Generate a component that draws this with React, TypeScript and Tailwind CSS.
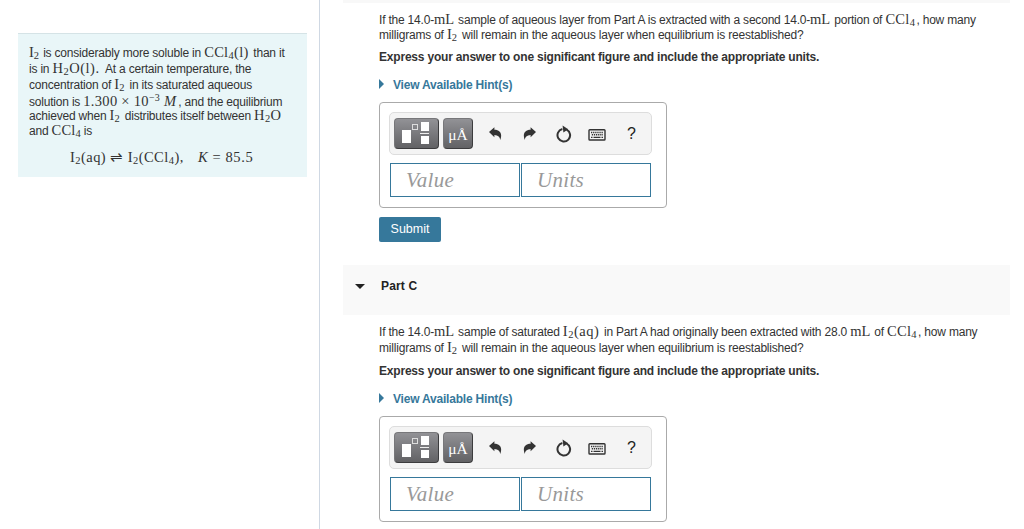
import type { ReactNode } from "react";
import clsx from "clsx";

interface TextProps {
  children: ReactNode;
  className?: string;
}

// One line of body copy
function Line({ children, className }: TextProps) {
  return <div className={clsx("whitespace-pre", className)}>{children}</div>;
}

// Inline chemistry / math
function Chem({ children, className }: TextProps) {
  return (
    <span
      className={clsx(
        "inline-block font-['Liberation_Serif',serif] text-[14.5px] leading-[14px] whitespace-pre",
        className ?? "tracking-normal"
      )}
    >
      {children}
    </span>
  );
}

function Sub({ children }: { children: ReactNode }) {
  return <span className="align-[-2px] text-[10.5px] leading-none">{children}</span>;
}

function TemplateIcon() {
  return (
    <svg width="43" height="31" viewBox="0 0 43 31" fill="none">
      <rect x="7" y="12" width="9" height="13" fill="#fff" />
      <rect x="17.5" y="6.5" width="5" height="5" stroke="#ddd" />
      <rect x="26" y="4" width="8" height="9" fill="#fff" />
      <rect x="25" y="15" width="9" height="1" fill="#eee" />
      <rect x="26" y="18" width="8" height="8" fill="#fff" />
    </svg>
  );
}

function UndoIcon({ className }: { className?: string }) {
  return (
    <svg className={className} width="13" height="14" viewBox="0 0 13 14" fill="#333">
      <path d="M0 5 5.4 0.3V2.8C11.5 2.8 13.6 7.4 11.2 13 11.1 9.7 9.2 8.1 5.4 7.9V10.2Z" />
    </svg>
  );
}

function ResetIcon() {
  return (
    <svg width="16" height="18" viewBox="0 0 16 18" fill="none">
      <path d="M10.6 4.6A6.3 6.3 0 1 1 6.4 4.1" stroke="#333" strokeWidth="2" />
      <path d="M6.6 0.6 12.2 4.2 7.4 7.4Z" fill="#333" />
    </svg>
  );
}

function KeyboardIcon() {
  return (
    <svg width="18" height="12" viewBox="0 0 18 12" fill="none">
      <rect x="1" y="0.75" width="16" height="10.2" rx="0.8" stroke="#333" strokeWidth="1.4" />
      <path d="M3 3.5H15M3.8 5.7H15" stroke="#333" strokeWidth="1.4" strokeDasharray="1.3 0.8" />
      <path d="M3 8.3H4.5M5.5 8.3H12.5M13.5 8.3H15" stroke="#333" strokeWidth="1.2" />
    </svg>
  );
}

const toolButton =
  "flex h-[31px] items-center justify-center rounded-[4px] border border-[#3c3c3e] border-t-[#77777a] border-l-[#77777a] bg-linear-to-b from-[#929296] to-[#626265]";

function AnswerBox() {
  return (
    <div className="h-[106px] w-[288px] rounded-[4px] border border-[#aaa] pt-[9px] pl-[9px]">
      <div className="flex h-[43px] w-[263px] items-center rounded-[5px] border border-[#ddd] bg-[#f4f4f4] pl-[4px]">
        <button className={clsx(toolButton, "w-[45px]")} aria-label="Templates">
          <TemplateIcon />
        </button>
        <button
          className={clsx(
            toolButton,
            "ml-[4px] w-[30px] pt-[3px] font-['Liberation_Serif',serif] text-[15.5px] leading-none tracking-normal text-white"
          )}
        >
          μÅ
        </button>
        <button className="ml-[16px]" aria-label="Undo">
          <UndoIcon />
        </button>
        <button className="ml-[21px]" aria-label="Redo">
          <UndoIcon className="-scale-x-100" />
        </button>
        <button className="ml-[20px]" aria-label="Reset">
          <ResetIcon />
        </button>
        <button className="mt-[3px] ml-[16px]" aria-label="Keyboard">
          <KeyboardIcon />
        </button>
        <button className="ml-[21px] text-[16px] leading-none text-[#222]">?</button>
      </div>
      <div className="mt-[8px] ml-[1px] flex gap-px font-['Liberation_Serif',serif] text-[21px] leading-[33px] tracking-[0.3px] text-[#999] italic">
        <div className="h-[34px] w-[130px] border border-[#36789b] pl-[15px]">Value</div>
        <div className="h-[34px] w-[130px] border border-[#36789b] pl-[15px]">Units</div>
      </div>
    </div>
  );
}

function Instructions() {
  return (
    <>
      <Line className="mt-[8px] h-[15px] leading-[15px] font-bold">
        Express your answer to one significant figure and include the appropriate units.
      </Line>
      <div className="mt-[12px] mb-[10px] flex h-[15px] items-center font-bold text-[#36789b]">
        <svg className="mb-[2px]" width="5" height="10" viewBox="0 0 5 10" fill="#36789b">
          <path d="M0 0 5 5 0 10Z" />
        </svg>
        <span className="ml-[9px]">View Available Hint(s)</span>
      </div>
    </>
  );
}

function Intro() {
  return (
    <aside className="w-[320px] shrink-0 border-r border-[#cfd8e3] pt-[33px] pl-[18px]">
      <div className="h-[144px] w-[289px] border-t border-[#d5e3e6] bg-[#e9f6f8] pt-[11px] pl-[11px]">
        <Line className="h-[16px] leading-[16px]">
          <Chem className="w-[11px] tracking-normal">I<Sub>2</Sub></Chem> is considerably more soluble in{" "}
          <Chem className="w-[46px] tracking-[0.3px]">CCl<Sub>4</Sub>(l)</Chem> than it
        </Line>
        <Line className="h-[16px] leading-[16px]">
          is in <Chem className="w-[50px] tracking-[0.5px]">H<Sub>2</Sub>O(l).</Chem> At a certain temperature, the
        </Line>
        <Line className="h-[16px] leading-[16px]">
          concentration of <Chem className="w-[12px] tracking-normal">I<Sub>2</Sub></Chem> in its saturated aqueous
        </Line>
        <Line className="h-[15px] leading-[16px]">
          solution is{" "}
          <Chem className="w-[95px] tracking-[0.3px]">
            1.300 × 10<span className="align-[5px] text-[10px] leading-none">−3</span> <i>M</i>
          </Chem>
          , and the equilibrium
        </Line>
        <Line className="h-[15px] leading-[15px]">
          achieved when <Chem className="w-[12px] tracking-normal">I<Sub>2</Sub></Chem> distributes itself between{" "}
          <Chem className="tracking-[0.4px]">H<Sub>2</Sub>O</Chem>
        </Line>
        <Line className="h-[15px] leading-[15px]">
          and <Chem className="w-[29px] tracking-[0.2px]">CCl<Sub>4</Sub></Chem> is
        </Line>
        <div className="mt-[11px] pl-[41px]">
          <Chem className="w-[128px] tracking-[0.45px]">I<Sub>2</Sub>(aq) ⇌ I<Sub>2</Sub>(CCl<Sub>4</Sub>),</Chem>
          <Chem className="tracking-[0.6px]"><i>K</i> = 85.5</Chem>
        </div>
      </div>
    </aside>
  );
}

export default function App() {
  return (
    <div className="flex h-[529px] w-[1024px] overflow-hidden bg-white font-['Liberation_Sans',Arial,sans-serif] text-[12px] tracking-[-0.2px] text-[#333]">
      <Intro />
      <main className="w-[690px] pl-[23px]">
        <div className="h-[3px] bg-[#f8f8f8]" />
        <section className="h-[262px] pt-[9px] pl-[36px]">
          <Line className="h-[15px] leading-[16px]">
            If the 14.0-<Chem className="w-[21px] tracking-normal">mL</Chem> sample of aqueous layer from Part A is
            {" "}extracted with a second 14.0-<Chem className="w-[21px] tracking-normal">mL</Chem> portion of{" "}
            <Chem className="w-[31px] tracking-[0.3px]">CCl<Sub>4</Sub></Chem>, how many
          </Line>
          <Line className="h-[15px] leading-[15px]">
            milligrams of <Chem className="w-[12px] tracking-normal">I<Sub>2</Sub></Chem> will remain in the aqueous layer when
            {" "}equilibrium is reestablished?
          </Line>
          <Instructions />
          <AnswerBox />
          <button className="mt-[9px] block h-[25px] w-[62px] rounded-[2px] bg-[#36789b] text-[12.5px] tracking-normal text-white">
            Submit
          </button>
        </section>

        <header className="flex h-[50px] items-center bg-[#f9f9f9] pb-[8px] pl-[12px]">
          <svg width="10" height="5" viewBox="0 0 10 5" fill="#222">
            <path d="M0 0H10L5 5Z" />
          </svg>
          <h2 className="ml-[16px] text-[12px] font-bold tracking-[0.15px] text-[#222]">Part C</h2>
        </header>

        <section className="pt-[9px] pl-[36px]">
          <Line className="h-[16px] leading-[16px]">
            If the 14.0-<Chem className="w-[21px] tracking-normal">mL</Chem> sample of saturated{" "}
            <Chem className="w-[38px] tracking-[0.5px]">I<Sub>2</Sub>(aq)</Chem> in Part A had originally been extracted with 28.0{" "}
            <Chem className="w-[21px] tracking-normal">mL</Chem> of{" "}
            <Chem className="w-[31px] tracking-[0.3px]">CCl<Sub>4</Sub></Chem>, how many
          </Line>
          <Line className="h-[16px] leading-[16px]">
            milligrams of <Chem className="w-[12px] tracking-normal">I<Sub>2</Sub></Chem> will remain in the aqueous layer when
            {" "}equilibrium is reestablished?
          </Line>
          <Instructions />
          <AnswerBox />
        </section>
      </main>
    </div>
  );
}
